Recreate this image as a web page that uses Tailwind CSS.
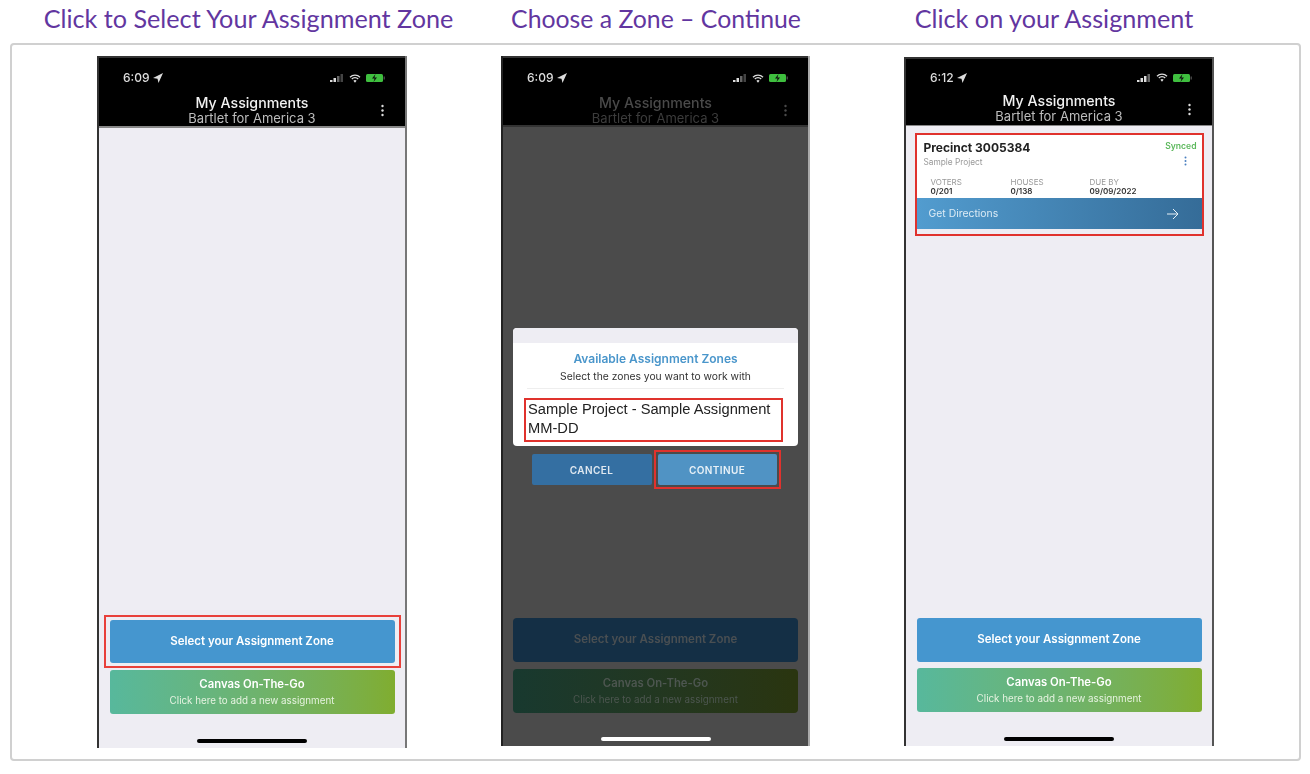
<!DOCTYPE html>
<html><head><meta charset="utf-8"><script src="https://cdn.jsdelivr.net/npm/@tailwindcss/browser@4"></script></head>
<body class="bg-white w-[1310px] h-[774px] overflow-hidden font-['Liberation_Sans',Arial,sans-serif]">
<div class="flex h-[43px] pt-[3px] font-['Lato',sans-serif] text-[25.2px] leading-[31px] text-[#6236a0]">
  <div class="w-[497px] text-center">Click to Select Your Assignment Zone</div>
  <div class="w-[318px] text-center text-[24.8px]">Choose a Zone – Continue</div>
  <div class="w-[478px] text-center">Click on your Assignment</div>
</div>
<div class="ml-[10px] w-[1291px] h-[718px] border-2 border-[#d0d0d0] rounded-[4px] pt-[11px] pl-[85px] flex gap-[94px] items-start">

  <!-- Phone 1 -->
  <div class="w-[310px] h-[692px] flex flex-col border-l-2 border-r-2 border-l-[#333] border-r-[#777] bg-[#eeedf3]">
    <div class="h-[72px] bg-black shrink-0 border-t-2 border-t-[#333] border-b-2 border-b-[#888] relative">
      <div class="flex items-center justify-between pl-[24px] pr-[20px] pt-[12px] h-[28px]">
        <span class="flex items-center gap-[3px] font-['Inter',sans-serif] text-[12px] font-medium text-[#ddd] blur-[0.5px]">6:09
          <svg width="10" height="10" viewBox="0 0 10 10"><path d="M10 0 0 5l4.5.8L5.5 10z" fill="#ddd"/></svg></span>
        <span class="flex items-center gap-[5px] blur-[0.3px]">
          <svg width="14" height="8" viewBox="0 0 14 8"><rect x="0" y="6" width="2.5" height="2" fill="#ddd"/><rect x="3.5" y="4" width="2.5" height="4" fill="#ddd"/><rect x="7" y="2" width="2.5" height="6" fill="#666"/><rect x="10.5" y="0" width="2.5" height="8" fill="#444"/></svg>
          <svg width="12" height="9" viewBox="0 0 12 9"><path d="M1 3.2a7 7 0 0 1 10 0M2.8 5a4.5 4.5 0 0 1 6.4 0" stroke="#ddd" stroke-width="1.3" fill="none"/><path d="M6 8.8 4.4 6.7a2.5 2.5 0 0 1 3.2 0z" fill="#ddd"/></svg>
          <svg width="19" height="8" viewBox="0 0 19 8"><rect width="17" height="8" rx="1.5" fill="#3fbf3f"/><rect x="17.5" y="2.5" width="1.5" height="3" fill="#444"/><path d="M9.5 0 6 4.5h2.5L7.5 8 11 3.5H8.5z" fill="#111"/></svg>
        </span>
      </div>
      <div class="text-center pt-[8px] blur-[0.5px] font-['Inter',sans-serif]">
        <div class="text-[14.2px] leading-[17px] font-medium text-[#f2f2f2]">My Assignments</div>
        <div class="text-[13px] leading-[15px] text-[#bdbdbd]">Bartlet for America 3</div>
      </div>
      <svg class="absolute left-[282px] top-[46px]" width="3" height="13" viewBox="0 0 3 13"><circle cx="1.5" cy="2" r="1.2" fill="#ddd"/><circle cx="1.5" cy="6.5" r="1.2" fill="#ddd"/><circle cx="1.5" cy="11" r="1.2" fill="#ddd"/></svg>
    </div>
    <div class="flex-1 flex flex-col justify-end items-center font-['Inter',sans-serif]">
      <div class="border-2 border-[#e8403a] w-[297px] h-[53px] px-[4px] py-[3px]">
        <div class="h-full bg-[#4596cf] rounded-[3px] flex items-center justify-center text-white text-[11.5px] font-semibold blur-[0.5px]">Select your Assignment Zone</div>
      </div>
      <div class="mt-[2px] w-[285px] h-[44px] rounded-[3px] bg-linear-to-r from-[#57b89c] to-[#80ad2f] text-center text-white pt-[7px] blur-[0.5px]">
        <div class="text-[11.3px] leading-[14px] font-semibold">Canvas On-The-Go</div>
        <div class="text-[9.8px] leading-[19px] text-[#e6f3e0]">Click here to add a new assignment</div>
      </div>
      <div class="mt-[25px] mb-[5px] w-[110px] h-[4px] rounded-full bg-black"></div>
    </div>
  </div>

  <!-- Phone 2 -->
  <div class="w-[309px] h-[690px] flex flex-col border-l-2 border-r-2 border-l-[#222] border-r-[#aaa] bg-[#4b4b4b]">
    <div class="h-[71px] bg-black shrink-0 border-t-2 border-t-[#333] border-b-2 border-b-[#333] relative">
      <div class="flex items-center justify-between pl-[24px] pr-[20px] pt-[12px] h-[28px]">
        <span class="flex items-center gap-[3px] font-['Inter',sans-serif] text-[12px] font-medium text-[#ddd] blur-[0.5px]">6:09
          <svg width="10" height="10" viewBox="0 0 10 10"><path d="M10 0 0 5l4.5.8L5.5 10z" fill="#ddd"/></svg></span>
        <span class="flex items-center gap-[5px] blur-[0.3px]">
          <svg width="14" height="8" viewBox="0 0 14 8"><rect x="0" y="6" width="2.5" height="2" fill="#ddd"/><rect x="3.5" y="4" width="2.5" height="4" fill="#ddd"/><rect x="7" y="2" width="2.5" height="6" fill="#666"/><rect x="10.5" y="0" width="2.5" height="8" fill="#444"/></svg>
          <svg width="12" height="9" viewBox="0 0 12 9"><path d="M1 3.2a7 7 0 0 1 10 0M2.8 5a4.5 4.5 0 0 1 6.4 0" stroke="#ddd" stroke-width="1.3" fill="none"/><path d="M6 8.8 4.4 6.7a2.5 2.5 0 0 1 3.2 0z" fill="#ddd"/></svg>
          <svg width="19" height="8" viewBox="0 0 19 8"><rect width="17" height="8" rx="1.5" fill="#3fbf3f"/><rect x="17.5" y="2.5" width="1.5" height="3" fill="#444"/><path d="M9.5 0 6 4.5h2.5L7.5 8 11 3.5H8.5z" fill="#111"/></svg>
        </span>
      </div>
      <div class="text-center pt-[8px] blur-[0.5px] font-['Inter',sans-serif]">
        <div class="text-[14.2px] leading-[17px] font-medium text-[#4a4a4a]">My Assignments</div>
        <div class="text-[13px] leading-[15px] text-[#3c3c3c]">Bartlet for America 3</div>
      </div>
      <svg class="absolute left-[281px] top-[46px]" width="3" height="13" viewBox="0 0 3 13"><circle cx="1.5" cy="2" r="1.2" fill="#4a4a4a"/><circle cx="1.5" cy="6.5" r="1.2" fill="#4a4a4a"/><circle cx="1.5" cy="11" r="1.2" fill="#4a4a4a"/></svg>
    </div>
    <div class="flex-1 flex flex-col items-center font-['Inter',sans-serif]">
      <div class="mt-[201px] w-[285px] h-[118px] bg-white rounded-[4px] overflow-hidden">
        <div class="h-[15px] bg-[#eeedf3]"></div>
        <div class="text-center text-[12px] leading-[15px] font-semibold text-[#4a96cb] pt-[8px] blur-[0.4px]">Available Assignment Zones</div>
        <div class="text-center text-[10.3px] leading-[15px] text-[#333] pt-[3px] blur-[0.4px]">Select the zones you want to work with</div>
        <div class="mt-[4px] mx-[14px] border-t border-[#eeeeee]"></div>
        <div class="ml-[11px] mt-[9px] w-[259px] h-[44px] border-2 border-[#e0322d] pl-[2px] font-['Liberation_Sans',sans-serif] text-[14.7px] leading-[19px] text-[#222]"><span class="blur-[0.3px] block">Sample Project - Sample Assignment MM-DD</span></div>
      </div>
      <div class="mt-[4px] ml-[1px] flex items-center gap-[2px]">
        <div class="w-[120px] h-[31px] pt-[1px] bg-[#346fa2] rounded-[2px] flex items-center justify-center text-[10px] font-semibold tracking-[0.4px] text-[#dfe8f0] blur-[0.4px]">CANCEL</div>
        <div class="w-[127px] h-[39px] border-2 border-[#e0322d] p-[2px]">
          <div class="h-full pt-[1px] bg-[#5093c4] rounded-[2px] flex items-center justify-center text-[10px] font-semibold tracking-[0.4px] text-[#e8f1f7] blur-[0.4px]">CONTINUE</div>
        </div>
      </div>
      <div class="mt-[129px] w-[285px] h-[44px] bg-[#142f45] rounded-[4px] flex items-center justify-center text-[#4a4f52] text-[11.5px] font-semibold blur-[0.4px]">Select your Assignment Zone</div>
      <div class="mt-[7px] w-[285px] h-[44px] rounded-[4px] bg-linear-to-r from-[#18392f] to-[#2a350f] text-center text-[#4d5650] pt-[7px] blur-[0.4px]">
        <div class="text-[11.3px] leading-[14px] font-semibold">Canvas On-The-Go</div>
        <div class="text-[9.8px] leading-[19px]">Click here to add a new assignment</div>
      </div>
      <div class="mt-[24px] w-[110px] h-[4px] rounded-full bg-white"></div>
    </div>
  </div>

  <!-- Phone 3 -->
  <div class="mt-[1px] w-[310px] h-[689px] flex flex-col border-l-2 border-r-2 border-l-[#333] border-r-[#555] bg-[#eeedf3]">
    <div class="h-[69px] bg-black shrink-0 border-t-2 border-t-[#333] border-b border-b-[#888] relative">
      <div class="flex items-center justify-between pl-[24px] pr-[20px] pt-[11px] h-[26px]">
        <span class="flex items-center gap-[3px] font-['Inter',sans-serif] text-[12px] font-medium text-[#ddd] blur-[0.5px]">6:12
          <svg width="10" height="10" viewBox="0 0 10 10"><path d="M10 0 0 5l4.5.8L5.5 10z" fill="#ddd"/></svg></span>
        <span class="flex items-center gap-[5px] blur-[0.3px]">
          <svg width="14" height="8" viewBox="0 0 14 8"><rect x="0" y="6" width="2.5" height="2" fill="#ddd"/><rect x="3.5" y="4" width="2.5" height="4" fill="#ddd"/><rect x="7" y="2" width="2.5" height="6" fill="#ddd"/><rect x="10.5" y="0" width="2.5" height="8" fill="#666"/></svg>
          <svg width="12" height="9" viewBox="0 0 12 9"><path d="M1 3.2a7 7 0 0 1 10 0M2.8 5a4.5 4.5 0 0 1 6.4 0" stroke="#ddd" stroke-width="1.3" fill="none"/><path d="M6 8.8 4.4 6.7a2.5 2.5 0 0 1 3.2 0z" fill="#ddd"/></svg>
          <svg width="19" height="8" viewBox="0 0 19 8"><rect width="17" height="8" rx="1.5" fill="#3fbf3f"/><rect x="17.5" y="2.5" width="1.5" height="3" fill="#444"/><path d="M9.5 0 6 4.5h2.5L7.5 8 11 3.5H8.5z" fill="#111"/></svg>
        </span>
      </div>
      <div class="text-center pt-[7px] blur-[0.5px] font-['Inter',sans-serif]">
        <div class="text-[14.2px] leading-[17px] font-medium text-[#f2f2f2]">My Assignments</div>
        <div class="text-[13px] leading-[15px] text-[#bdbdbd]">Bartlet for America 3</div>
      </div>
      <svg class="absolute left-[282px] top-[44px]" width="3" height="13" viewBox="0 0 3 13"><circle cx="1.5" cy="2" r="1.2" fill="#ddd"/><circle cx="1.5" cy="6.5" r="1.2" fill="#ddd"/><circle cx="1.5" cy="11" r="1.2" fill="#ddd"/></svg>
    </div>
    <div class="flex-1 flex flex-col items-center font-['Inter',sans-serif]">
      <div class="mt-[7px] w-[289px] h-[103px] border-2 border-[#e0322d] bg-[#eeedf3]">
        <div class="h-[94px] bg-white flex flex-col">
          <div class="flex justify-between pl-[7px] pr-[5px] pt-[4px] h-[42px]">
            <div class="blur-[0.4px]">
              <div class="text-[12px] leading-[15px] font-bold text-[#222] pt-[1px]">Precinct 3005384</div>
              <div class="text-[8.3px] leading-[12px] mt-[1px] text-[#999]">Sample Project</div>
            </div>
            <div class="flex flex-col items-end blur-[0.4px]">
              <div class="text-[8.6px] leading-[10px] font-semibold text-[#5cb85c] mt-[2px]">Synced</div>
              <svg class="mt-[5px] mr-[10px]" width="3" height="10" viewBox="0 0 3 10"><circle cx="1.5" cy="1.5" r="1" fill="#4a7fc0"/><circle cx="1.5" cy="5" r="1" fill="#4a7fc0"/><circle cx="1.5" cy="8.5" r="1" fill="#4a7fc0"/></svg>
            </div>
          </div>
          <div class="flex pl-[14px] text-[8px] leading-[9px] pt-[1px] h-[21px] blur-[0.4px]">
            <div class="w-[80px]"><div class="text-[#999]">VOTERS</div><div class="font-semibold text-[#333]">0/201</div></div>
            <div class="w-[79px]"><div class="text-[#999]">HOUSES</div><div class="font-semibold text-[#333]">0/138</div></div>
            <div><div class="text-[#999]">DUE BY</div><div class="font-semibold text-[#333]">09/09/2022</div></div>
          </div>
          <div class="h-[31px] bg-linear-to-r from-[#529ccf] to-[#356c98] flex items-center justify-between pl-[12px] pr-[23px] text-[10.4px] text-[#dcebf5]">
            <span class="blur-[0.4px]">Get Directions</span>
            <svg width="12" height="12" viewBox="0 0 12 12" fill="none" stroke="#e8f1f7" stroke-width="1"><path d="M0 6h11M6 1l5 5-5 5"/></svg>
          </div>
        </div>
      </div>
      <div class="mt-[382px] w-[285px] h-[44px] bg-[#4596cf] rounded-[3px] flex items-center justify-center text-white text-[11.5px] font-semibold blur-[0.5px]">Select your Assignment Zone</div>
      <div class="mt-[6px] w-[285px] h-[44px] rounded-[3px] bg-linear-to-r from-[#57b89c] to-[#80ad2f] text-center text-white pt-[7px] blur-[0.5px]">
        <div class="text-[11.3px] leading-[14px] font-semibold">Canvas On-The-Go</div>
        <div class="text-[9.8px] leading-[19px] text-[#e6f3e0]">Click here to add a new assignment</div>
      </div>
      <div class="mt-[25px] w-[110px] h-[4px] rounded-full bg-black"></div>
    </div>
  </div>
</div>
</body></html>
